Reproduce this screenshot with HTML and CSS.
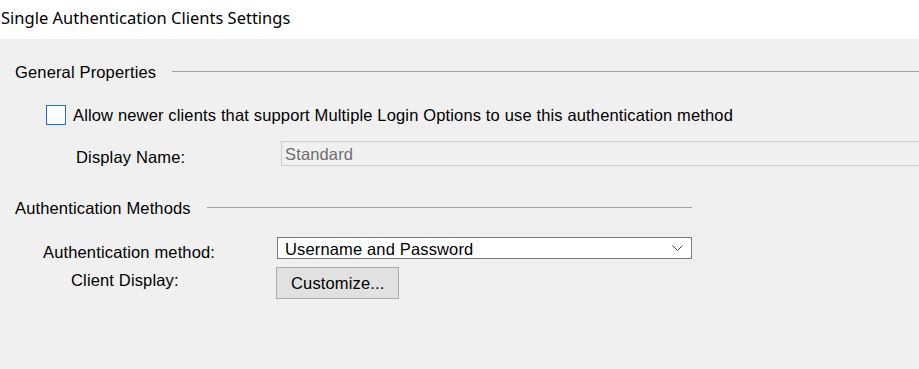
FILE: index.html
```html
<!DOCTYPE html>
<html>
<head>
<meta charset="utf-8">
<link rel="stylesheet" href="styles.css">
</head>
<body>
<div class="window">
  <div class="titlebar">Single Authentication Clients Settings</div>
  <div class="panel">
    <div class="section-head head-general">
      <span class="section-title">General Properties</span>
      <span class="rule"></span>
    </div>
    <div class="row row-check">
      <span class="checkbox"></span>
      <span class="check-label">Allow newer clients that support Multiple Login Options to use this authentication method</span>
    </div>
    <div class="row row-display">
      <span class="label label-display">Display Name:</span>
      <div class="textbox">Standard</div>
    </div>
    <div class="section-head head-auth">
      <span class="section-title">Authentication Methods</span>
      <span class="rule"></span>
    </div>
    <div class="row row-method">
      <span class="label label-method">Authentication method:</span>
      <div class="select">
        <span>Username and Password</span>
        <svg class="chevron" width="11" height="7" viewBox="0 0 11 7"><path d="M0.5 0.5 L5.5 5.5 L10.5 0.5" fill="none" stroke="#444" stroke-width="1"/></svg>
      </div>
    </div>
    <div class="row row-client">
      <span class="label label-client">Client Display:</span>
      <div class="button">Customize...</div>
    </div>
  </div>
</div>
</body>
</html>
```

FILE: styles.css
```css
html, body {
  margin: 0;
  padding: 0;
}
body {
  width: 919px;
  height: 369px;
  overflow: hidden;
  background: #f0f0f0;
  font-family: "Liberation Sans", Arial, sans-serif;
  font-size: 16.5px;
  letter-spacing: 0.15px;
  color: #000;
}
.window {
  display: flex;
  flex-direction: column;
  height: 369px;
}
.titlebar {
  height: 39px;
  background: #fff;
  font-family: "Noto Sans", "Open Sans", sans-serif;
  font-size: 16.5px;
  letter-spacing: 0;
  line-height: 36px;
  padding-left: 1px;
  box-sizing: border-box;
}
.panel {
  flex: 1;
  background: #f0f0f0;
  padding-top: 23px;
  display: flex;
  flex-direction: column;
  overflow: hidden;
}
.section-head {
  display: flex;
  align-items: center;
  gap: 16px;
  height: 20px;
  padding-left: 15px;
}
.section-title {
  white-space: nowrap;
  line-height: 20px;
}
.rule {
  flex: 1;
  border-top: 1px solid #a0a0a0;
  height: 0;
}
.head-general .rule {
  margin-top: -1px;
}
.head-auth {
  margin-top: 32px;
  width: 692px;
  box-sizing: border-box;
}
.head-auth .rule {
  margin-top: -2px;
}
.row {
  display: flex;
  align-items: center;
}
.row-check {
  margin-top: 23px;
  height: 20px;
  padding-left: 46px;
}
.checkbox {
  width: 20px;
  height: 20px;
  box-sizing: border-box;
  border: 1px solid #1874d0;
  background: #fff;
  flex: none;
}
.check-label {
  margin-left: 7px;
  white-space: nowrap;
}
.row-display {
  margin-top: 16px;
  height: 25px;
}
.label {
  white-space: nowrap;
}
.label-display {
  padding-left: 76px;
  width: 281px;
  box-sizing: border-box;
  flex: none;
  padding-top: 7px;
}
.textbox {
  width: 640px;
  height: 25px;
  box-sizing: border-box;
  border: 1px solid #cccccc;
  border-right: none;
  background: #f0f0f0;
  color: #6d6d6d;
  padding-left: 3px;
  line-height: 24px;
  flex: none;
}
.row-method {
  margin-top: 19px;
  height: 22px;
}
.label-method {
  padding-left: 43px;
  width: 277px;
  box-sizing: border-box;
  flex: none;
  padding-top: 9px;
}
.select {
  width: 415px;
  height: 22px;
  box-sizing: border-box;
  border: 1px solid #7a7a7a;
  background: #fff;
  display: flex;
  align-items: center;
  justify-content: space-between;
  padding-left: 7px;
  padding-right: 8px;
  line-height: 20px;
}
.select span {
  padding-top: 2px;
}
.chevron {
  display: block;
  margin-top: 1px;
}
.row-client {
  margin-top: 8px;
  align-items: flex-start;
}
.label-client {
  padding-left: 71px;
  width: 276px;
  box-sizing: border-box;
  flex: none;
  padding-top: 3px;
  line-height: 20px;
}
.button {
  width: 123px;
  height: 32px;
  box-sizing: border-box;
  border: 1px solid #adadad;
  background: #e1e1e1;
  padding-left: 14px;
  line-height: 30px;
}
```
